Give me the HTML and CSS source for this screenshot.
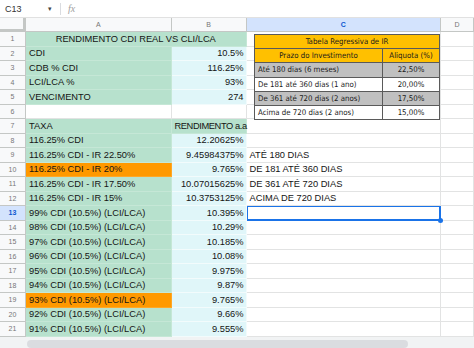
FILE: index.html
```html
<!DOCTYPE html>
<html>
<head>
  <title>Rendimento CDI</title>
  <link rel="stylesheet" href="styles.css">
</head>
<body>
  <div class="formula-bar">
    <span class="name-box">C13</span>
    <span class="caret">&#9662;</span>
    <span class="sep"></span>
    <span class="fx">fx</span>
  </div>

  <div class="sheet">
    <div class="corner"></div>
    <div class="colh">A</div>
    <div class="colh">B</div>
    <div class="colh sel">C</div>
    <div class="colh">D</div>

    <div class="rh">1</div>
    <div class="c g ctr span2">RENDIMENTO CDI REAL VS CLI/LCA</div>
    <div class="c"></div><div class="c"></div>

    <div class="rh">2</div>
    <div class="c g">CDI</div><div class="c b r">10.5%</div>
    <div class="c"></div><div class="c"></div>

    <div class="rh">3</div>
    <div class="c g">CDB % CDI</div><div class="c b r">116.25%</div>
    <div class="c"></div><div class="c"></div>

    <div class="rh">4</div>
    <div class="c g">LCI/LCA %</div><div class="c b r">93%</div>
    <div class="c"></div><div class="c"></div>

    <div class="rh">5</div>
    <div class="c g">VENCIMENTO</div><div class="c b r">274</div>
    <div class="c"></div><div class="c"></div>

    <div class="rh">6</div>
    <div class="c"></div><div class="c"></div>
    <div class="c"></div><div class="c"></div>

    <div class="rh">7</div>
    <div class="c g">TAXA</div><div class="c g tight">RENDIMENTO a.a</div>
    <div class="c"></div><div class="c"></div>

    <div class="rh">8</div>
    <div class="c g">116.25% CDI</div><div class="c b r">12.20625%</div>
    <div class="c"></div><div class="c"></div>

    <div class="rh">9</div>
    <div class="c g">116.25% CDI - IR 22.50%</div><div class="c b r">9.45984375%</div>
    <div class="c">ATÉ 180 DIAS</div><div class="c"></div>

    <div class="rh">10</div>
    <div class="c o">116.25% CDI - IR 20%</div><div class="c b r">9.765%</div>
    <div class="c">DE 181 ATÉ 360 DIAS</div><div class="c"></div>

    <div class="rh">11</div>
    <div class="c g">116.25% CDI - IR 17.50%</div><div class="c b r">10.07015625%</div>
    <div class="c">DE 361 ATÉ 720 DIAS</div><div class="c"></div>

    <div class="rh">12</div>
    <div class="c g">116.25% CDI - IR 15%</div><div class="c b r">10.3753125%</div>
    <div class="c">ACIMA DE 720 DIAS</div><div class="c"></div>

    <div class="rh sel">13</div>
    <div class="c g">99% CDI (10.5%) (LCI/LCA)</div><div class="c b r">10.395%</div>
    <div class="c active"></div><div class="c"></div>

    <div class="rh">14</div>
    <div class="c g">98% CDI (10.5%) (LCI/LCA)</div><div class="c b r">10.29%</div>
    <div class="c"></div><div class="c"></div>

    <div class="rh">15</div>
    <div class="c g">97% CDI (10.5%) (LCI/LCA)</div><div class="c b r">10.185%</div>
    <div class="c"></div><div class="c"></div>

    <div class="rh">16</div>
    <div class="c g">96% CDI (10.5%) (LCI/LCA)</div><div class="c b r">10.08%</div>
    <div class="c"></div><div class="c"></div>

    <div class="rh">17</div>
    <div class="c g">95% CDI (10.5%) (LCI/LCA)</div><div class="c b r">9.975%</div>
    <div class="c"></div><div class="c"></div>

    <div class="rh">18</div>
    <div class="c g">94% CDI (10.5%) (LCI/LCA)</div><div class="c b r">9.87%</div>
    <div class="c"></div><div class="c"></div>

    <div class="rh">19</div>
    <div class="c o">93% CDI (10.5%) (LCI/LCA)</div><div class="c b r">9.765%</div>
    <div class="c"></div><div class="c"></div>

    <div class="rh">20</div>
    <div class="c g">92% CDI (10.5%) (LCI/LCA)</div><div class="c b r">9.66%</div>
    <div class="c"></div><div class="c"></div>

    <div class="rh">21</div>
    <div class="c g">91% CDI (10.5%) (LCI/LCA)</div><div class="c b r">9.555%</div>
    <div class="c"></div><div class="c"></div>

    <!-- pasted picture of the IR table, floats over column C -->
    <table class="ir-table">
      <tr class="yl"><td colspan="2">Tabela Regressiva de IR</td></tr>
      <tr class="yl"><td>Prazo do Investimento</td><td>Aliquota (%)</td></tr>
      <tr class="gr"><td class="lft">Até 180 dias (6 meses)</td><td>22,50%</td></tr>
      <tr><td class="lft">De 181 até 360 dias (1 ano)</td><td>20,00%</td></tr>
      <tr class="gr"><td class="lft">De 361 até 720 dias (2 anos)</td><td>17,50%</td></tr>
      <tr><td class="lft">Acima de 720 dias (2 anos)</td><td>15,00%</td></tr>
    </table>
  </div>

  <div class="hscroll">
    <div class="hs-left"></div>
    <div class="hs-thumb"></div>
  </div>
</body>
</html>
```

FILE: styles.css
```css
* {
  box-sizing: border-box;
}

body {
  margin: 0;
  width: 474px;
  height: 348px;
  overflow: hidden;
  background: #fff;
  font-family: "Liberation Sans", Arial, sans-serif;
  color: #141414;
}

.formula-bar {
  height: 18px;
  display: flex;
  align-items: center;
  border-bottom: 1px solid #e1e1e1;
  font-size: 9px;
}

.name-box {
  width: 48px;
  padding-left: 5px;
  color: #333;
}

.caret {
  font-size: 7px;
  color: #444;
  width: 10px;
}

.sep {
  width: 1px;
  height: 12px;
  background: #dadce0;
  margin-left: 2px;
}

.fx {
  margin-left: 7px;
  font-family: "Liberation Serif", serif;
  font-style: italic;
  font-size: 10px;
  color: #a0a0a0;
}

.sheet {
  position: relative;
  display: grid;
  grid-template-columns: 26px 145.5px 75px 194.5px 1fr;
  grid-template-rows: 14px repeat(21, 14.5px);
  font-size: 9.3px;
}

.corner,
.colh,
.rh {
  background: #f8f9fa;
  color: #777;
  font-size: 7px;
  display: flex;
  align-items: center;
  justify-content: center;
  border-right: 1px solid #c4c7c5;
  border-bottom: 1px solid #c4c7c5;
}

.corner {
  border-right-width: 3px;
  border-bottom-width: 3px;
}

.colh.sel,
.rh.sel {
  background: #d3e3fd;
  color: #0b57d0;
  font-weight: bold;
}

.c {
  display: flex;
  align-items: center;
  padding: 0 3px;
  white-space: nowrap;
  overflow: visible;
  border-right: 1px solid #e2e3e3;
  border-bottom: 1px solid #e2e3e3;
}

.span2 {
  grid-column: span 2;
}

.ctr {
  justify-content: center;
}

.r {
  justify-content: flex-end;
  padding-right: 2px;
}

.tight {
  letter-spacing: -0.4px;
}

.g {
  background: #b7e1cd;
  border-color: #c5e7d6;
}

.b {
  background: #e0f6f9;
  border-color: #f2fbfc;
}

.o {
  background: #ff9900;
  border-color: #ffa726;
}

.active {
  position: relative;
  box-shadow: inset 0 0 0 1px #1a73e8;
  border-color: #1a73e8;
}

.active::after {
  content: "";
  position: absolute;
  right: -3px;
  bottom: -3px;
  width: 5px;
  height: 5px;
  border-radius: 50%;
  background: #1a73e8;
}

.ir-table {
  position: absolute;
  left: 254px;
  top: 16px;
  width: 186px;
  border-collapse: collapse;
  font-family: "DejaVu Sans Condensed", "Liberation Sans", sans-serif;
  font-stretch: condensed;
  font-size: 7.8px;
  color: #1a1a1a;
  background: #fff;
}

.ir-table td {
  height: 14.2px;
  padding: 0 3px;
  border: 1px solid #5a5a5a;
  text-align: center;
  white-space: nowrap;
}

.ir-table td.lft {
  text-align: left;
  width: 128px;
}

.ir-table .yl td {
  background: #ffc000;
}

.ir-table .gr td {
  background: #c0c0c0;
}

.hscroll {
  display: flex;
  height: 12px;
  background: #f1f3f4;
  padding-top: 3px;
}

.hs-left {
  width: 27px;
}

.hs-thumb {
  width: 381px;
  height: 8px;
  border-radius: 4px;
  background: #dadce0;
}
```
